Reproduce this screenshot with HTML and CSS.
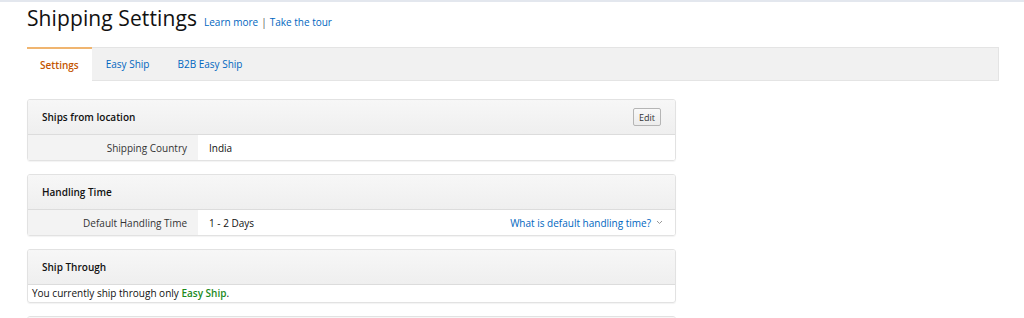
FILE: index.html
```html
<!DOCTYPE html>
<html lang="en">
<head>
    <meta charset="UTF-8">
    <title>Shipping Settings</title>
    <link rel="stylesheet" href="styles.css">
</head>
<body>
    <div class="page">
        <div class="title-row">
            <h1>Shipping Settings</h1>
            <a href="#">Learn more</a><span class="sep">|</span><a href="#">Take the tour</a>
        </div>
        <ul class="tabs">
            <li class="active"><a href="#">Settings</a></li>
            <li><a href="#">Easy Ship</a></li>
            <li><a href="#">B2B Easy Ship</a></li>
        </ul>

        <div class="box">
            <div class="box-head">
                <h3>Ships from location</h3>
                <button class="btn">Edit</button>
            </div>
            <div class="row">
                <div class="label">Shipping Country</div>
                <div class="value">India</div>
            </div>
        </div>

        <div class="box">
            <div class="box-head">
                <h3>Handling Time</h3>
            </div>
            <div class="row">
                <div class="label">Default Handling Time</div>
                <div class="value">1 - 2 Days</div>
                <a class="help" href="#">What is default handling time?
                    <svg width="7" height="5" viewBox="0 0 7 5"><path d="M1 1l2.5 2.5L6 1" fill="none" stroke="#999" stroke-width="1"/></svg>
                </a>
            </div>
        </div>

        <div class="box">
            <div class="box-head">
                <h3>Ship Through</h3>
            </div>
            <div class="note">You currently ship through only <b>Easy Ship</b>.</div>
        </div>

        <div class="box">
            <div class="box-head">
                <h3>&nbsp;</h3>
            </div>
        </div>
    </div>
</body>
</html>
```

FILE: styles.css
```css
body {
    margin: 0;
    font-family: "Open Sans", Arial, sans-serif;
    font-size: 10px;
    color: #111;
    background: #fff;
    border-top: 2px solid #e3e7ee;
}
a {
    color: #0066c0;
    text-decoration: none;
}
.page {
    padding: 0 25px 0 27px;
}
.title-row {
    display: flex;
    align-items: baseline;
    height: 35px;
    padding-top: 2px;
}
.title-row h1 {
    margin: 0 7px 0 0;
    font-size: 21px;
    font-weight: 400;
    letter-spacing: 0.1px;
}
.title-row a {
    font-size: 10px;
}
.sep {
    margin: 0 3px;
    color: #555;
}
.tabs {
    list-style: none;
    display: flex;
    margin: 8px 0 18px;
    padding: 0;
    background: #f1f1f1;
    border: 1px solid #e4e4e4;
    height: 32px;
}
.tabs li {
    display: flex;
    align-items: center;
    padding: 0 14px;
}
.tabs li.active {
    background: #fff;
    border-top: 2px solid #f0b570;
    margin: -1px 0 -1px -1px;
    padding: 0 13px;
}
.tabs li.active a {
    color: #c45500;
    font-weight: 600;
}
.box {
    width: 647px;
    border: 1px solid #e2e2e2;
    border-radius: 3px;
    margin-bottom: 13px;
    box-shadow: 0 1px 1px rgba(0,0,0,0.05);
    overflow: hidden;
}
.box-head {
    display: flex;
    justify-content: space-between;
    align-items: center;
    height: 34px;
    padding: 0 14px;
    background: linear-gradient(#f7f7f7, #efefef);
    border-bottom: 1px solid #dcdcdc;
}
.box-head h3 {
    margin: 0;
    font-size: 10px;
    font-weight: 600;
}
.btn {
    font-family: inherit;
    font-size: 9px;
    color: #333;
    background: linear-gradient(#f9f9f9, #ececec);
    border: 1px solid #b5b5b5;
    border-radius: 2px;
    padding: 0 5px;
    height: 18px;
}
.row {
    display: flex;
    align-items: center;
    height: 25px;
    background: #fff;
}
.label {
    width: 159px;
    height: 100%;
    display: flex;
    align-items: center;
    justify-content: flex-end;
    padding-right: 11px;
    background: #f3f3f3;
    color: #333;
}
.value {
    padding-left: 11px;
    flex: 1;
}
.help {
    padding-right: 12px;
    display: flex;
    align-items: center;
    gap: 5px;
}
.note {
    padding: 0 4px;
    line-height: 17px;
}
.note b {
    color: #1c8a1c;
    font-weight: 600;
}
```
